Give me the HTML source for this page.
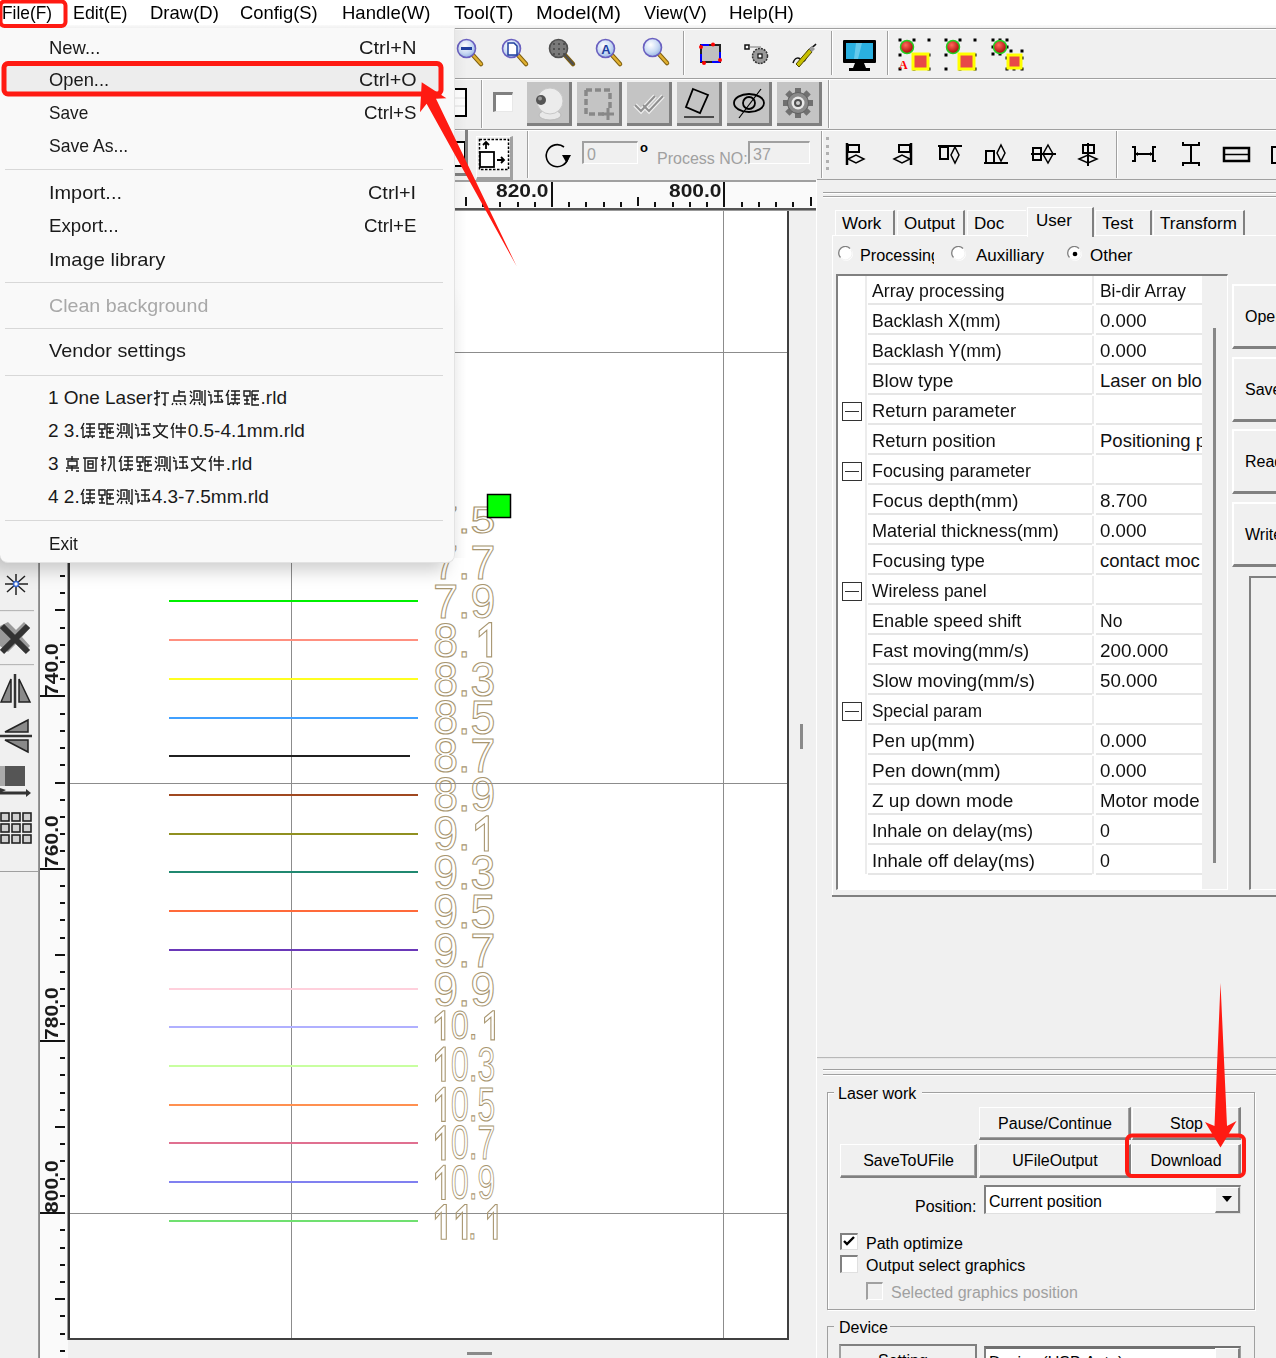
<!DOCTYPE html>
<html><head><meta charset="utf-8"><style>
*{margin:0;padding:0;box-sizing:border-box}
html,body{width:1276px;height:1358px;overflow:hidden;background:#f0f0f0;font-family:"Liberation Sans",sans-serif;color:#000}
.a{position:absolute}
.t{position:absolute;white-space:nowrap;line-height:1}
.hl{position:absolute;height:1px}
.vl{position:absolute;width:1px}
</style></head><body>
<div class="a" style="left:0px;top:0px;width:1276px;height:25px;background:#fff"></div>
<div class="a" style="left:0px;top:25px;width:1276px;height:3px;background:linear-gradient(#fafafa,#f0f0f0)"></div>
<div class="t" style="left:2.0px;top:2.9px;font-size:19px;color:#000;transform-origin:0 0;transform:scaleX(0.9106);">File(F)</div>
<div class="t" style="left:72.5px;top:2.9px;font-size:19px;color:#000;transform-origin:0 0;transform:scaleX(0.9389);">Edit(E)</div>
<div class="t" style="left:149.5px;top:2.9px;font-size:19px;color:#000;transform-origin:0 0;transform:scaleX(0.9734);">Draw(D)</div>
<div class="t" style="left:240.3px;top:2.9px;font-size:19px;color:#000;transform-origin:0 0;transform:scaleX(0.9679);">Config(S)</div>
<div class="t" style="left:341.9px;top:2.9px;font-size:19px;color:#000;transform-origin:0 0;transform:scaleX(0.9745);">Handle(W)</div>
<div class="t" style="left:454.0px;top:2.9px;font-size:19px;color:#000;transform-origin:0 0;transform:scaleX(1.0052);">Tool(T)</div>
<div class="t" style="left:536.0px;top:2.9px;font-size:19px;color:#000;transform-origin:0 0;transform:scaleX(1.0589);">Model(M)</div>
<div class="t" style="left:643.7px;top:2.9px;font-size:19px;color:#000;transform-origin:0 0;transform:scaleX(0.9499);">View(V)</div>
<div class="t" style="left:729.2px;top:2.9px;font-size:19px;color:#000;transform-origin:0 0;transform:scaleX(0.9915);">Help(H)</div>
<div class="a" style="left:0px;top:28px;width:1276px;height:1px;background:#a0a0a0"></div>
<div class="a" style="left:0px;top:29px;width:1276px;height:1px;background:#fff"></div>
<div class="a" style="left:0px;top:78px;width:1276px;height:1px;background:#a0a0a0"></div>
<div class="a" style="left:0px;top:79px;width:1276px;height:1px;background:#fff"></div>
<div class="a" style="left:0px;top:129px;width:1276px;height:1px;background:#a0a0a0"></div>
<div class="a" style="left:0px;top:130px;width:1276px;height:1px;background:#fff"></div>
<div class="a" style="left:817px;top:179px;width:459px;height:1px;background:#a0a0a0"></div>
<svg width="0" height="0" style="position:absolute"><defs><radialGradient id="mg" cx="0.4" cy="0.35" r="0.7"><stop offset="0" stop-color="#ffffff"/><stop offset="0.6" stop-color="#c8daf4"/><stop offset="1" stop-color="#90b0e0"/></radialGradient><radialGradient id="rb" cx="0.4" cy="0.35" r="0.7"><stop offset="0" stop-color="#ff6a5a"/><stop offset="1" stop-color="#a00000"/></radialGradient></defs></svg>
<svg class="a" style="left:454.5px;top:37px" width="31" height="31" viewBox="0 0 31 31"><line x1="17" y1="17" x2="26" y2="27" stroke="#806010" stroke-width="4.5" stroke-linecap="round"/><line x1="17" y1="17" x2="26" y2="27" stroke="#e0b030" stroke-width="2.5" stroke-linecap="round"/><circle cx="11.5" cy="11.5" r="9" fill="url(#mg)" stroke="#6a60c0" stroke-width="1.6"/><rect x="6" y="10" width="11" height="3" fill="#2040a0"/></svg>
<svg class="a" style="left:500px;top:37px" width="31" height="31" viewBox="0 0 31 31"><line x1="17" y1="17" x2="26" y2="27" stroke="#806010" stroke-width="4.5" stroke-linecap="round"/><line x1="17" y1="17" x2="26" y2="27" stroke="#e0b030" stroke-width="2.5" stroke-linecap="round"/><circle cx="11.5" cy="11.5" r="9" fill="url(#mg)" stroke="#6a60c0" stroke-width="1.6"/><path d="M8 6h6l3 3v9H8z" fill="#fff" stroke="#2040a0" stroke-width="1.5"/></svg>
<svg class="a" style="left:547px;top:37px" width="31" height="31" viewBox="0 0 31 31"><line x1="17" y1="17" x2="26" y2="27" stroke="#806010" stroke-width="4.5" stroke-linecap="round"/><line x1="17" y1="17" x2="26" y2="27" stroke="#505050" stroke-width="2.5" stroke-linecap="round"/><circle cx="11.5" cy="11.5" r="9" fill="#7a7a7a" stroke="#505050" stroke-width="1.6"/><g fill="#444"><circle cx="7" cy="7" r="1"/><circle cx="7" cy="12" r="1"/><circle cx="7" cy="17" r="1"/><circle cx="12" cy="7" r="1"/><circle cx="12" cy="12" r="1"/><circle cx="12" cy="17" r="1"/><circle cx="17" cy="7" r="1"/><circle cx="17" cy="12" r="1"/><circle cx="17" cy="17" r="1"/></g></svg>
<svg class="a" style="left:593.5px;top:37px" width="31" height="31" viewBox="0 0 31 31"><line x1="17" y1="17" x2="26" y2="27" stroke="#806010" stroke-width="4.5" stroke-linecap="round"/><line x1="17" y1="17" x2="26" y2="27" stroke="#e0b030" stroke-width="2.5" stroke-linecap="round"/><circle cx="11.5" cy="11.5" r="9" fill="url(#mg)" stroke="#6a60c0" stroke-width="1.6"/><text x="12" y="17" font-size="13" font-weight="bold" text-anchor="middle" fill="#2040a0" font-family="Liberation Sans">A</text></svg>
<svg class="a" style="left:640.5px;top:36px" width="31" height="31" viewBox="0 0 31 31"><line x1="17" y1="17" x2="26" y2="27" stroke="#806010" stroke-width="4.5" stroke-linecap="round"/><line x1="17" y1="17" x2="26" y2="27" stroke="#e0b030" stroke-width="2.5" stroke-linecap="round"/><circle cx="11.5" cy="11.5" r="9" fill="url(#mg)" stroke="#6a60c0" stroke-width="1.6"/></svg>
<div class="a" style="left:683px;top:31px;width:1px;height:44px;background:#a0a0a0"></div>
<div class="a" style="left:684px;top:31px;width:1px;height:44px;background:#fff"></div>
<svg class="a" style="left:698px;top:42px" width="26" height="24" viewBox="0 0 26 24"><rect x="3" y="3" width="19" height="17" fill="#c0c0c0" stroke="#222" stroke-width="2"/><path d="M3 3h8M22 10v10M3 12v8M14 20h8" stroke="#0000ff" stroke-width="2"/><g fill="#f00"><circle cx="3" cy="5" r="2"/><circle cx="15" cy="2.5" r="2"/><circle cx="22" cy="18" r="2"/><circle cx="6" cy="21" r="2"/></g></svg>
<svg class="a" style="left:744px;top:44px" width="28" height="22" viewBox="0 0 28 22"><rect x="1" y="1" width="4" height="4" fill="#fff" stroke="#111" stroke-width="1.5"/><path d="M5 3h12" stroke="#777"/><circle cx="16" cy="12" r="7.5" fill="#9a9a9a" stroke="#333" stroke-width="1.5" stroke-dasharray="2 1"/><rect x="14" y="10" width="4" height="4" fill="#fff" stroke="#111" stroke-width="1.2"/></svg>
<svg class="a" style="left:790px;top:42px" width="28" height="26" viewBox="0 0 28 26"><path d="M3 21c2-6 6-6 8-3s6 0 6-6 6-6 9-10" fill="none" stroke="#111" stroke-width="1.5"/><path d="M6 22l13-15 3 3-13 15z" fill="#c8c000" stroke="#504800" stroke-width="1"/><path d="M19 7l3-3 3 3-3 3z" fill="#999"/></svg>
<div class="a" style="left:831px;top:31px;width:1px;height:44px;background:#a0a0a0"></div>
<div class="a" style="left:832px;top:31px;width:1px;height:44px;background:#fff"></div>
<svg class="a" style="left:842px;top:39px" width="35" height="33" viewBox="0 0 35 33"><rect x="1" y="1" width="33" height="23" rx="1" fill="#000"/><rect x="4" y="4" width="27" height="16" fill="#2ab0e0"/><path d="M14 4l6 0-4 16h-4z" fill="#7fd4f0" opacity="0.7"/><path d="M13 24h9l2 5h4v3H7v-3h4z" fill="#000"/></svg>
<div class="a" style="left:887px;top:31px;width:1px;height:44px;background:#a0a0a0"></div>
<div class="a" style="left:888px;top:31px;width:1px;height:44px;background:#fff"></div>
<svg class="a" style="left:897.5px;top:38px" width="34" height="34" viewBox="0 0 34 34"><rect x="0.5" y="0.5" width="3" height="3" fill="#000"/><rect x="14.5" y="0.5" width="3" height="3" fill="#000"/><rect x="29.5" y="0.5" width="3" height="3" fill="#000"/><rect x="0.5" y="15.5" width="3" height="3" fill="#000"/><rect x="29.5" y="15.5" width="3" height="3" fill="#000"/><rect x="0.5" y="29.5" width="3" height="3" fill="#000"/><rect x="14.5" y="29.5" width="3" height="3" fill="#000"/><rect x="29.5" y="29.5" width="3" height="3" fill="#000"/><circle cx="9" cy="9" r="6.5" fill="url(#rb)" stroke="#20d020" stroke-width="1.5"/><rect x="15" y="16" width="15" height="15" fill="#e84848" stroke="#ffff00" stroke-width="3"/><text x="1" y="31" font-size="12" font-weight="bold" fill="#f00" font-family="Liberation Serif">A</text></svg>
<svg class="a" style="left:943.5px;top:38px" width="34" height="34" viewBox="0 0 34 34"><rect x="0.5" y="0.5" width="3" height="3" fill="#000"/><rect x="14.5" y="0.5" width="3" height="3" fill="#000"/><rect x="29.5" y="0.5" width="3" height="3" fill="#000"/><rect x="0.5" y="15.5" width="3" height="3" fill="#000"/><rect x="29.5" y="15.5" width="3" height="3" fill="#000"/><rect x="0.5" y="29.5" width="3" height="3" fill="#000"/><rect x="14.5" y="29.5" width="3" height="3" fill="#000"/><rect x="29.5" y="29.5" width="3" height="3" fill="#000"/><circle cx="9" cy="9" r="6.5" fill="url(#rb)" stroke="#20d020" stroke-width="1.5"/><rect x="15" y="16" width="15" height="15" fill="#e84848" stroke="#ffff00" stroke-width="3"/></svg>
<svg class="a" style="left:990.5px;top:38px" width="34" height="34" viewBox="0 0 34 34"><rect x="0.5" y="0.5" width="3" height="3" fill="#000"/><rect x="7.5" y="0.5" width="3" height="3" fill="#000"/><rect x="14.5" y="0.5" width="3" height="3" fill="#000"/><rect x="0.5" y="7.5" width="3" height="3" fill="#000"/><rect x="14.5" y="7.5" width="3" height="3" fill="#000"/><rect x="0.5" y="14.5" width="3" height="3" fill="#000"/><rect x="7.5" y="14.5" width="3" height="3" fill="#000"/><rect x="18.5" y="11.5" width="3" height="3" fill="#000"/><rect x="29.5" y="11.5" width="3" height="3" fill="#000"/><rect x="14.5" y="18.5" width="3" height="3" fill="#000"/><rect x="29.5" y="18.5" width="3" height="3" fill="#000"/><rect x="14.5" y="29.5" width="3" height="3" fill="#000"/><rect x="21.5" y="29.5" width="3" height="3" fill="#000"/><rect x="29.5" y="29.5" width="3" height="3" fill="#000"/><circle cx="9" cy="9" r="6.5" fill="url(#rb)" stroke="#20d020" stroke-width="1.5"/><rect x="17" y="17" width="13" height="13" fill="#e84848" stroke="#ffff00" stroke-width="3"/></svg>
<svg class="a" style="left:451px;top:86px" width="18" height="34" viewBox="0 0 18 34"><rect x="1" y="3" width="14" height="27" fill="#fff" stroke="#000" stroke-width="2"/><path d="M2 12h12M2 20h12" stroke="#e0e0e0"/></svg>
<div class="a" style="left:481px;top:80px;width:1px;height:48px;background:#a0a0a0"></div>
<div class="a" style="left:482px;top:80px;width:1px;height:48px;background:#fff"></div>
<div class="a" style="left:493px;top:92px;width:20px;height:20px;background:#fff;border-top:3px solid #808080;border-left:3px solid #808080;border-right:1px solid #e8e8e8;border-bottom:1px solid #e8e8e8"></div>
<div class="a" style="left:527px;top:82px;width:45px;height:44px;background:#c4c4c4;border-right:3px solid #808080;border-bottom:3px solid #808080;"></div>
<div class="a" style="left:577px;top:82px;width:45px;height:44px;background:#c4c4c4;border-right:3px solid #808080;border-bottom:3px solid #808080;"></div>
<div class="a" style="left:627px;top:82px;width:45px;height:44px;background:#c4c4c4;border-right:3px solid #808080;border-bottom:3px solid #808080;"></div>
<div class="a" style="left:677px;top:82px;width:45px;height:44px;background:#c4c4c4;border-right:3px solid #808080;border-bottom:3px solid #808080;"></div>
<div class="a" style="left:727px;top:82px;width:45px;height:44px;background:#c4c4c4;border-right:3px solid #808080;border-bottom:3px solid #808080;"></div>
<div class="a" style="left:777px;top:82px;width:45px;height:44px;background:#c4c4c4;border-right:3px solid #808080;border-bottom:3px solid #808080;"></div>
<svg class="a" style="left:532px;top:86px" width="36" height="36" viewBox="0 0 36 36"><ellipse cx="18" cy="29" rx="11" ry="5" fill="#e8e8e8" stroke="#bbb"/><circle cx="18" cy="15" r="13" fill="#ececec" stroke="#c8c8c8"/><circle cx="9" cy="14" r="5" fill="#555"/><circle cx="8" cy="12.5" r="2" fill="#999"/></svg>
<svg class="a" style="left:582px;top:86px" width="36" height="36" viewBox="0 0 36 36"><path d="M4 4h24v20M4 4v24h20" fill="none" stroke="#888" stroke-width="3.5" stroke-dasharray="6 3"/><path d="M26 22v12M20 28h12" stroke="#888" stroke-width="3"/></svg>
<svg class="a" style="left:632px;top:86px" width="36" height="36" viewBox="0 0 36 36"><path d="M3 19l6 6 14-15M11 19l6 6 14-15" fill="none" stroke="#f0f0f0" stroke-width="4.5"/><path d="M3 19l6 6 14-15M11 19l6 6 14-15" fill="none" stroke="#909090" stroke-width="2"/></svg>
<svg class="a" style="left:682px;top:86px" width="36" height="36" viewBox="0 0 36 36"><path d="M11 3l15 6-8 18-14-6z" fill="none" stroke="#000" stroke-width="1.8"/><path d="M2 31h30" stroke="#222" stroke-width="1.5"/></svg>
<svg class="a" style="left:730px;top:86px" width="40" height="36" viewBox="0 0 40 36"><ellipse cx="19" cy="17" rx="15" ry="9" fill="none" stroke="#000" stroke-width="1.8"/><circle cx="19" cy="17" r="6" fill="none" stroke="#000" stroke-width="1.8"/><path d="M31 3L9 32" stroke="#000" stroke-width="1.2"/></svg>
<svg class="a" style="left:780px;top:86px" width="36" height="36" viewBox="0 0 36 36"><g transform="translate(18,17)"><rect x="-3" y="-15" width="6" height="7" fill="#707070" transform="rotate(0)"/><rect x="-3" y="-15" width="6" height="7" fill="#707070" transform="rotate(45)"/><rect x="-3" y="-15" width="6" height="7" fill="#707070" transform="rotate(90)"/><rect x="-3" y="-15" width="6" height="7" fill="#707070" transform="rotate(135)"/><rect x="-3" y="-15" width="6" height="7" fill="#707070" transform="rotate(180)"/><rect x="-3" y="-15" width="6" height="7" fill="#707070" transform="rotate(225)"/><rect x="-3" y="-15" width="6" height="7" fill="#707070" transform="rotate(270)"/><rect x="-3" y="-15" width="6" height="7" fill="#707070" transform="rotate(315)"/><circle r="10.5" fill="#8a8a8a" stroke="#606060" stroke-width="1"/><circle r="6.5" fill="#e8e8e8"/><circle r="4" fill="#505050"/><circle r="2" fill="#d0d0d0"/></g></svg>
<div class="a" style="left:828px;top:80px;width:1px;height:48px;background:#a0a0a0"></div>
<div class="a" style="left:829px;top:80px;width:1px;height:48px;background:#fff"></div>
<svg class="a" style="left:451px;top:136px" width="18" height="38" viewBox="0 0 18 38"><rect x="2" y="6" width="12" height="24" fill="#fff" stroke="#000" stroke-width="2"/></svg>
<div class="a" style="left:454px;top:130px;width:14px;height:46px;border-right:3px solid #808080;border-bottom:3px solid #808080"></div>
<div class="a" style="left:476px;top:136px;width:37px;height:44px;background:#f0f0f0;border-right:3px solid #a0a0a0;border-bottom:3px solid #a0a0a0;border-top:1px solid #fff;border-left:1px solid #fff"></div>
<svg class="a" style="left:478px;top:138px" width="32" height="36" viewBox="0 0 32 36"><rect x="1.5" y="1.5" width="29" height="30" fill="#fff" stroke="#000" stroke-width="1.5" stroke-dasharray="2.5 1.5"/><rect x="2" y="14" width="14" height="15" fill="#fff" stroke="#000" stroke-width="1.8"/><path d="M8 11V4M5 7l3-3 3 3" fill="none" stroke="#000" stroke-width="1.8"/><path d="M19 22h7M23 19l3 3-3 3" fill="none" stroke="#000" stroke-width="1.8"/></svg>
<div class="a" style="left:527px;top:131px;width:1px;height:47px;background:#a0a0a0"></div>
<div class="a" style="left:528px;top:131px;width:1px;height:47px;background:#fff"></div>
<svg class="a" style="left:542px;top:141px" width="32" height="30" viewBox="0 0 32 30"><path d="M22 6A11 11 0 1 0 26 17" fill="none" stroke="#000" stroke-width="1.6"/><path d="M20 14h9l-4.5 8z" fill="#000"/></svg>
<div class="a" style="left:582px;top:141px;width:56px;height:23px;background:#f0f0f0;border-top:2px solid #a0a0a0;border-left:2px solid #a0a0a0;border-right:1px solid #fff;border-bottom:1px solid #fff"></div>
<div class="t" style="left:587px;top:146.5px;font-size:16px;color:#a0a0a0;">0</div>
<div class="t" style="left:640px;top:141.0px;font-size:13px;color:#000;font-weight:bold">o</div>
<div class="t" style="left:657px;top:150.5px;font-size:16px;color:#a0a0a0;">Process NO:</div>
<div class="a" style="left:748px;top:141px;width:62px;height:23px;background:#f0f0f0;border-top:2px solid #a0a0a0;border-left:2px solid #a0a0a0;border-right:1px solid #fff;border-bottom:1px solid #fff"></div>
<div class="t" style="left:753px;top:146.5px;font-size:16px;color:#a0a0a0;">37</div>
<div class="a" style="left:821px;top:131px;width:1px;height:47px;background:#a0a0a0"></div>
<div class="a" style="left:822px;top:131px;width:1px;height:47px;background:#fff"></div>
<div class="a" style="left:826px;top:137.0px;width:3px;height:3px;background:#b0b0b0"></div>
<div class="a" style="left:826px;top:144.5px;width:3px;height:3px;background:#b0b0b0"></div>
<div class="a" style="left:826px;top:152.0px;width:3px;height:3px;background:#b0b0b0"></div>
<div class="a" style="left:826px;top:159.5px;width:3px;height:3px;background:#b0b0b0"></div>
<div class="a" style="left:826px;top:167.0px;width:3px;height:3px;background:#b0b0b0"></div>
<svg class="a" style="left:845px;top:142px" width="27" height="26" viewBox="0 0 27 26"><path d="M2 1v22" stroke="#000" stroke-width="2.5"/><rect x="3" y="3" width="11" height="7" fill="none" stroke="#000" stroke-width="2"/><path d="M3 17l8-4 8 4-8 4z" fill="none" stroke="#000" stroke-width="1.5"/></svg>
<svg class="a" style="left:892px;top:142px" width="27" height="26" viewBox="0 0 27 26"><path d="M19 1v22" stroke="#000" stroke-width="2.5"/><rect x="7" y="3" width="11" height="7" fill="none" stroke="#000" stroke-width="2"/><path d="M2 17l8-4 8 4-8 4z" fill="none" stroke="#000" stroke-width="1.5"/></svg>
<svg class="a" style="left:937px;top:142px" width="27" height="26" viewBox="0 0 27 26"><path d="M1 4h24" stroke="#000" stroke-width="2"/><rect x="3" y="5" width="8" height="12" fill="none" stroke="#000" stroke-width="2"/><path d="M18 5l4 8-4 8-4-8z" fill="none" stroke="#000" stroke-width="1.5"/></svg>
<svg class="a" style="left:983px;top:142px" width="27" height="26" viewBox="0 0 27 26"><path d="M1 21h24" stroke="#000" stroke-width="2"/><rect x="3" y="9" width="8" height="12" fill="none" stroke="#000" stroke-width="2"/><path d="M18 3l4 8-4 8-4-8z" fill="none" stroke="#000" stroke-width="1.5"/></svg>
<svg class="a" style="left:1030px;top:142px" width="27" height="26" viewBox="0 0 27 26"><path d="M1 12h25" stroke="#000" stroke-width="2"/><rect x="3" y="6" width="8" height="12" fill="none" stroke="#000" stroke-width="2"/><path d="M18 3l5 9-5 9-5-9z" fill="none" stroke="#000" stroke-width="1.5"/></svg>
<svg class="a" style="left:1076px;top:142px" width="27" height="26" viewBox="0 0 27 26"><path d="M12 1v23" stroke="#000" stroke-width="2"/><rect x="7" y="3" width="11" height="8" fill="none" stroke="#000" stroke-width="2"/><path d="M3 17l9-4 9 4-9 4z" fill="none" stroke="#000" stroke-width="1.5"/></svg>
<div class="a" style="left:1116px;top:131px;width:1px;height:47px;background:#a0a0a0"></div>
<div class="a" style="left:1117px;top:131px;width:1px;height:47px;background:#fff"></div>
<svg class="a" style="left:1130px;top:144px" width="28" height="20" viewBox="0 0 28 20"><path d="M2 3h3v14H2M26 3h-3v14h3M5 10h18" fill="none" stroke="#000" stroke-width="2"/><path d="M5 10l3-2v4zM23 10l-3-2v4z" fill="#000"/></svg>
<svg class="a" style="left:1180px;top:140px" width="22" height="28" viewBox="0 0 22 28"><path d="M3 2v3h16V2M3 26v-3h16v3M11 5v18" fill="none" stroke="#000" stroke-width="2"/></svg>
<svg class="a" style="left:1222px;top:146px" width="30" height="18" viewBox="0 0 30 18"><rect x="2" y="2" width="25" height="13" fill="none" stroke="#000" stroke-width="2.5"/><path d="M3 8.5h23" stroke="#000" stroke-width="1.5"/></svg>
<div class="a" style="left:1271px;top:146px;width:5px;height:18px;border-left:2px solid #000;border-top:2px solid #000;border-bottom:2px solid #000"></div>
<div class="a" style="left:0px;top:211px;width:38px;height:661px;background:#f0f0f0"></div>
<div class="a" style="left:38px;top:211px;width:2px;height:1147px;background:linear-gradient(90deg,#a0a0a0,#808080)"></div>
<div class="a" style="left:40px;top:211px;width:28px;height:1147px;background:#fafafa"></div>
<div class="a" style="left:70px;top:211px;width:718px;height:1127px;background:#fff"></div>
<div class="a" style="left:67px;top:211px;width:1px;height:1129px;background:#999"></div>
<div class="a" style="left:68px;top:211px;width:2px;height:1129px;background:#333"></div>
<div class="a" style="left:68px;top:1338px;width:721px;height:2px;background:#404040"></div>
<div class="a" style="left:787px;top:211px;width:2px;height:1129px;background:#404040"></div>
<div class="a" style="left:40px;top:180px;width:776px;height:2px;background:#a0a0a0"></div>
<div class="a" style="left:40px;top:182px;width:776px;height:26px;background:#fafafa"></div>
<div class="a" style="left:40px;top:208px;width:776px;height:2px;background:#555"></div>
<div class="a" style="left:40px;top:210px;width:776px;height:1px;background:#999"></div>
<div class="a" style="left:789px;top:211px;width:27px;height:1147px;background:#f0f0f0"></div>
<div class="a" style="left:800px;top:724px;width:3px;height:25px;background:#8a8a8a"></div>
<div class="a" style="left:467px;top:1352px;width:25px;height:3px;background:#8a8a8a"></div>
<div class="a" style="left:379px;top:182px;width:2px;height:25px;background:#111"></div>
<div class="a" style="left:396px;top:202px;width:2px;height:5px;background:#111"></div>
<div class="a" style="left:413px;top:202px;width:2px;height:5px;background:#111"></div>
<div class="a" style="left:430px;top:202px;width:2px;height:5px;background:#111"></div>
<div class="a" style="left:448px;top:202px;width:2px;height:5px;background:#111"></div>
<div class="a" style="left:465px;top:197px;width:2px;height:9px;background:#111"></div>
<div class="a" style="left:482px;top:202px;width:2px;height:5px;background:#111"></div>
<div class="a" style="left:499px;top:202px;width:2px;height:5px;background:#111"></div>
<div class="a" style="left:517px;top:202px;width:2px;height:5px;background:#111"></div>
<div class="a" style="left:534px;top:202px;width:2px;height:5px;background:#111"></div>
<div class="a" style="left:551px;top:182px;width:2px;height:25px;background:#111"></div>
<div class="a" style="left:568px;top:202px;width:2px;height:5px;background:#111"></div>
<div class="a" style="left:585px;top:202px;width:2px;height:5px;background:#111"></div>
<div class="a" style="left:603px;top:202px;width:2px;height:5px;background:#111"></div>
<div class="a" style="left:620px;top:202px;width:2px;height:5px;background:#111"></div>
<div class="a" style="left:637px;top:197px;width:2px;height:9px;background:#111"></div>
<div class="a" style="left:654px;top:202px;width:2px;height:5px;background:#111"></div>
<div class="a" style="left:672px;top:202px;width:2px;height:5px;background:#111"></div>
<div class="a" style="left:689px;top:202px;width:2px;height:5px;background:#111"></div>
<div class="a" style="left:706px;top:202px;width:2px;height:5px;background:#111"></div>
<div class="a" style="left:723px;top:182px;width:2px;height:25px;background:#111"></div>
<div class="a" style="left:741px;top:202px;width:2px;height:5px;background:#111"></div>
<div class="a" style="left:758px;top:202px;width:2px;height:5px;background:#111"></div>
<div class="a" style="left:775px;top:202px;width:2px;height:5px;background:#111"></div>
<div class="a" style="left:792px;top:202px;width:2px;height:5px;background:#111"></div>
<div class="a" style="left:810px;top:197px;width:2px;height:9px;background:#111"></div>
<div class="t" style="left:496.4px;top:183.4px;font-size:17.7px;color:#1a1a1a;transform-origin:0 0;transform:scaleX(1.1841);font-weight:bold;">820.0</div>
<div class="t" style="left:668.9px;top:183.4px;font-size:17.7px;color:#1a1a1a;transform-origin:0 0;transform:scaleX(1.1841);font-weight:bold;">800.0</div>
<div class="t" style="left:324.0px;top:183.4px;font-size:17.7px;color:#1a1a1a;transform-origin:0 0;transform:scaleX(1.1841);font-weight:bold;">840.0</div>
<div class="t" style="left:151.7px;top:183.4px;font-size:17.7px;color:#1a1a1a;transform-origin:0 0;transform:scaleX(1.1841);font-weight:bold;">860.0</div>
<div class="a" style="left:40px;top:351px;width:25px;height:2px;background:#111"></div>
<div class="a" style="left:60px;top:368px;width:5px;height:2px;background:#111"></div>
<div class="a" style="left:60px;top:386px;width:5px;height:2px;background:#111"></div>
<div class="a" style="left:60px;top:403px;width:5px;height:2px;background:#111"></div>
<div class="a" style="left:60px;top:420px;width:5px;height:2px;background:#111"></div>
<div class="a" style="left:55px;top:437px;width:10px;height:2px;background:#111"></div>
<div class="a" style="left:60px;top:454px;width:5px;height:2px;background:#111"></div>
<div class="a" style="left:60px;top:472px;width:5px;height:2px;background:#111"></div>
<div class="a" style="left:60px;top:489px;width:5px;height:2px;background:#111"></div>
<div class="a" style="left:60px;top:506px;width:5px;height:2px;background:#111"></div>
<div class="a" style="left:40px;top:523px;width:25px;height:2px;background:#111"></div>
<div class="a" style="left:60px;top:541px;width:5px;height:2px;background:#111"></div>
<div class="a" style="left:60px;top:558px;width:5px;height:2px;background:#111"></div>
<div class="a" style="left:60px;top:575px;width:5px;height:2px;background:#111"></div>
<div class="a" style="left:60px;top:592px;width:5px;height:2px;background:#111"></div>
<div class="a" style="left:55px;top:609px;width:10px;height:2px;background:#111"></div>
<div class="a" style="left:60px;top:627px;width:5px;height:2px;background:#111"></div>
<div class="a" style="left:60px;top:644px;width:5px;height:2px;background:#111"></div>
<div class="a" style="left:60px;top:661px;width:5px;height:2px;background:#111"></div>
<div class="a" style="left:60px;top:678px;width:5px;height:2px;background:#111"></div>
<div class="a" style="left:40px;top:695px;width:25px;height:2px;background:#111"></div>
<div class="a" style="left:60px;top:713px;width:5px;height:2px;background:#111"></div>
<div class="a" style="left:60px;top:730px;width:5px;height:2px;background:#111"></div>
<div class="a" style="left:60px;top:747px;width:5px;height:2px;background:#111"></div>
<div class="a" style="left:60px;top:764px;width:5px;height:2px;background:#111"></div>
<div class="a" style="left:55px;top:782px;width:10px;height:2px;background:#111"></div>
<div class="a" style="left:60px;top:799px;width:5px;height:2px;background:#111"></div>
<div class="a" style="left:60px;top:816px;width:5px;height:2px;background:#111"></div>
<div class="a" style="left:60px;top:833px;width:5px;height:2px;background:#111"></div>
<div class="a" style="left:60px;top:850px;width:5px;height:2px;background:#111"></div>
<div class="a" style="left:40px;top:868px;width:25px;height:2px;background:#111"></div>
<div class="a" style="left:60px;top:885px;width:5px;height:2px;background:#111"></div>
<div class="a" style="left:60px;top:902px;width:5px;height:2px;background:#111"></div>
<div class="a" style="left:60px;top:919px;width:5px;height:2px;background:#111"></div>
<div class="a" style="left:60px;top:937px;width:5px;height:2px;background:#111"></div>
<div class="a" style="left:55px;top:954px;width:10px;height:2px;background:#111"></div>
<div class="a" style="left:60px;top:971px;width:5px;height:2px;background:#111"></div>
<div class="a" style="left:60px;top:988px;width:5px;height:2px;background:#111"></div>
<div class="a" style="left:60px;top:1005px;width:5px;height:2px;background:#111"></div>
<div class="a" style="left:60px;top:1023px;width:5px;height:2px;background:#111"></div>
<div class="a" style="left:40px;top:1040px;width:25px;height:2px;background:#111"></div>
<div class="a" style="left:60px;top:1057px;width:5px;height:2px;background:#111"></div>
<div class="a" style="left:60px;top:1074px;width:5px;height:2px;background:#111"></div>
<div class="a" style="left:60px;top:1092px;width:5px;height:2px;background:#111"></div>
<div class="a" style="left:60px;top:1109px;width:5px;height:2px;background:#111"></div>
<div class="a" style="left:55px;top:1126px;width:10px;height:2px;background:#111"></div>
<div class="a" style="left:60px;top:1143px;width:5px;height:2px;background:#111"></div>
<div class="a" style="left:60px;top:1160px;width:5px;height:2px;background:#111"></div>
<div class="a" style="left:60px;top:1178px;width:5px;height:2px;background:#111"></div>
<div class="a" style="left:60px;top:1195px;width:5px;height:2px;background:#111"></div>
<div class="a" style="left:40px;top:1212px;width:25px;height:2px;background:#111"></div>
<div class="a" style="left:60px;top:1229px;width:5px;height:2px;background:#111"></div>
<div class="a" style="left:60px;top:1247px;width:5px;height:2px;background:#111"></div>
<div class="a" style="left:60px;top:1264px;width:5px;height:2px;background:#111"></div>
<div class="a" style="left:60px;top:1281px;width:5px;height:2px;background:#111"></div>
<div class="a" style="left:55px;top:1298px;width:10px;height:2px;background:#111"></div>
<div class="a" style="left:60px;top:1315px;width:5px;height:2px;background:#111"></div>
<div class="a" style="left:60px;top:1333px;width:5px;height:2px;background:#111"></div>
<div class="a" style="left:60px;top:1350px;width:5px;height:2px;background:#111"></div>
<div class="a" style="left:43.7px;top:695.5px;width:0;height:0;transform-origin:0 0;transform:rotate(-90deg)"><div class="t" style="left:-0.00px;top:-0.66px;font-size:18.5px;font-weight:bold;color:#1a1a1a;transform-origin:0 0;transform:scaleX(1.1393)">740.0</div></div>
<div class="a" style="left:43.7px;top:867.7px;width:0;height:0;transform-origin:0 0;transform:rotate(-90deg)"><div class="t" style="left:-0.00px;top:-0.66px;font-size:18.5px;font-weight:bold;color:#1a1a1a;transform-origin:0 0;transform:scaleX(1.1393)">760.0</div></div>
<div class="a" style="left:43.7px;top:1040.0px;width:0;height:0;transform-origin:0 0;transform:rotate(-90deg)"><div class="t" style="left:-0.00px;top:-0.66px;font-size:18.5px;font-weight:bold;color:#1a1a1a;transform-origin:0 0;transform:scaleX(1.1393)">780.0</div></div>
<div class="a" style="left:43.7px;top:1212.7px;width:0;height:0;transform-origin:0 0;transform:rotate(-90deg)"><div class="t" style="left:-0.00px;top:-0.66px;font-size:18.5px;font-weight:bold;color:#1a1a1a;transform-origin:0 0;transform:scaleX(1.1393)">800.0</div></div>
<div class="a" style="left:43.7px;top:523.2px;width:0;height:0;transform-origin:0 0;transform:rotate(-90deg)"><div class="t" style="left:-0.00px;top:-0.66px;font-size:18.5px;font-weight:bold;color:#1a1a1a;transform-origin:0 0;transform:scaleX(1.1393)">720.0</div></div>
<div class="a" style="left:43.7px;top:351.2px;width:0;height:0;transform-origin:0 0;transform:rotate(-90deg)"><div class="t" style="left:-0.00px;top:-0.66px;font-size:18.5px;font-weight:bold;color:#1a1a1a;transform-origin:0 0;transform:scaleX(1.1393)">700.0</div></div>
<div class="a" style="left:291px;top:211px;width:1px;height:1127px;background:#8c8c8c"></div>
<div class="a" style="left:723px;top:211px;width:1px;height:1127px;background:#8c8c8c"></div>
<div class="a" style="left:70px;top:352px;width:717px;height:1px;background:#8c8c8c"></div>
<div class="a" style="left:70px;top:783px;width:717px;height:1px;background:#8c8c8c"></div>
<div class="a" style="left:70px;top:1213px;width:717px;height:1px;background:#8c8c8c"></div>
<div class="a" style="left:169px;top:600px;width:249px;height:2px;background:#00f000"></div>
<div class="a" style="left:169px;top:639px;width:249px;height:2px;background:#ff9080"></div>
<div class="a" style="left:169px;top:678px;width:249px;height:2px;background:#ffff20"></div>
<div class="a" style="left:169px;top:717px;width:249px;height:2px;background:#40a0ff"></div>
<div class="a" style="left:169px;top:755px;width:241px;height:2px;background:#202020"></div>
<div class="a" style="left:169px;top:794px;width:249px;height:2px;background:#a04820"></div>
<div class="a" style="left:169px;top:833px;width:249px;height:2px;background:#909020"></div>
<div class="a" style="left:169px;top:871px;width:249px;height:2px;background:#208870"></div>
<div class="a" style="left:169px;top:910px;width:249px;height:2px;background:#ff6a3a"></div>
<div class="a" style="left:169px;top:949px;width:249px;height:2px;background:#6a38b8"></div>
<div class="a" style="left:169px;top:988px;width:249px;height:2px;background:#ffd0dc"></div>
<div class="a" style="left:169px;top:1026px;width:249px;height:2px;background:#b0b0ff"></div>
<div class="a" style="left:169px;top:1065px;width:249px;height:2px;background:#c8ffa0"></div>
<div class="a" style="left:169px;top:1104px;width:249px;height:2px;background:#ff9050"></div>
<div class="a" style="left:169px;top:1142px;width:249px;height:2px;background:#e07090"></div>
<div class="a" style="left:169px;top:1181px;width:249px;height:2px;background:#8080f0"></div>
<div class="a" style="left:169px;top:1220px;width:249px;height:2px;background:#70e070"></div>
<svg class="a" style="left:0;top:0" width="1276" height="1358"><text x="433.3" y="533.40" font-family="Liberation Sans" font-size="37.26" textLength="62.0" lengthAdjust="spacingAndGlyphs" fill="none" stroke="#a89670" stroke-width="1.1">7.5</text><text x="433.3" y="578.80" font-family="Liberation Sans" font-size="48.59" textLength="62.0" lengthAdjust="spacingAndGlyphs" fill="none" stroke="#a89670" stroke-width="1.1">7.7</text><text x="433.3" y="617.60" font-family="Liberation Sans" font-size="48.59" textLength="62.0" lengthAdjust="spacingAndGlyphs" fill="none" stroke="#a89670" stroke-width="1.1">7.9</text><text x="433.3" y="656.60" font-family="Liberation Sans" font-size="48.59" textLength="62.0" lengthAdjust="spacingAndGlyphs" fill="none" stroke="#a89670" stroke-width="1.1">8.<tspan stroke="none">1</tspan></text><text x="433.3" y="695.60" font-family="Liberation Sans" font-size="48.59" textLength="62.0" lengthAdjust="spacingAndGlyphs" fill="none" stroke="#a89670" stroke-width="1.1">8.3</text><text x="433.3" y="734.00" font-family="Liberation Sans" font-size="48.59" textLength="62.0" lengthAdjust="spacingAndGlyphs" fill="none" stroke="#a89670" stroke-width="1.1">8.5</text><text x="433.3" y="772.40" font-family="Liberation Sans" font-size="48.59" textLength="62.0" lengthAdjust="spacingAndGlyphs" fill="none" stroke="#a89670" stroke-width="1.1">8.7</text><text x="433.3" y="811.20" font-family="Liberation Sans" font-size="48.59" textLength="62.0" lengthAdjust="spacingAndGlyphs" fill="none" stroke="#a89670" stroke-width="1.1">8.9</text><text x="433.3" y="849.60" font-family="Liberation Sans" font-size="48.59" textLength="62.0" lengthAdjust="spacingAndGlyphs" fill="none" stroke="#a89670" stroke-width="1.1">9.<tspan stroke="none">1</tspan></text><text x="433.3" y="888.80" font-family="Liberation Sans" font-size="48.59" textLength="62.0" lengthAdjust="spacingAndGlyphs" fill="none" stroke="#a89670" stroke-width="1.1">9.3</text><text x="433.3" y="928.40" font-family="Liberation Sans" font-size="48.59" textLength="62.0" lengthAdjust="spacingAndGlyphs" fill="none" stroke="#a89670" stroke-width="1.1">9.5</text><text x="433.3" y="966.80" font-family="Liberation Sans" font-size="48.59" textLength="62.0" lengthAdjust="spacingAndGlyphs" fill="none" stroke="#a89670" stroke-width="1.1">9.7</text><text x="433.3" y="1005.60" font-family="Liberation Sans" font-size="48.59" textLength="62.0" lengthAdjust="spacingAndGlyphs" fill="none" stroke="#a89670" stroke-width="1.1">9.9</text><text x="433.3" y="1039.40" font-family="Liberation Sans" font-size="40.39" textLength="62.0" lengthAdjust="spacingAndGlyphs" fill="none" stroke="#a89670" stroke-width="1.1"><tspan stroke="none">1</tspan>0.<tspan stroke="none">1</tspan></text><text x="433.3" y="1080.80" font-family="Liberation Sans" font-size="48.34" textLength="62.0" lengthAdjust="spacingAndGlyphs" fill="none" stroke="#a89670" stroke-width="1.1"><tspan stroke="none">1</tspan>0.3</text><text x="433.3" y="1120.60" font-family="Liberation Sans" font-size="48.34" textLength="62.0" lengthAdjust="spacingAndGlyphs" fill="none" stroke="#a89670" stroke-width="1.1"><tspan stroke="none">1</tspan>0.5</text><text x="433.3" y="1159.40" font-family="Liberation Sans" font-size="48.34" textLength="62.0" lengthAdjust="spacingAndGlyphs" fill="none" stroke="#a89670" stroke-width="1.1"><tspan stroke="none">1</tspan>0.7</text><text x="433.3" y="1199.00" font-family="Liberation Sans" font-size="48.34" textLength="62.0" lengthAdjust="spacingAndGlyphs" fill="none" stroke="#a89670" stroke-width="1.1"><tspan stroke="none">1</tspan>0.9</text><text x="433.3" y="1238.60" font-family="Liberation Sans" font-size="48.34" textLength="62.0" lengthAdjust="spacingAndGlyphs" fill="none" stroke="#a89670" stroke-width="1.1"><tspan stroke="none">1</tspan><tspan stroke="none">1</tspan>.<tspan stroke="none">1</tspan></text><path d="M491.6 622.6L491.6 656.9L486.8 656.9L486.8 630.3L479.2 636.8L479.2 630.7L489.1 622.6Z" fill="none" stroke="#a89670" stroke-width="1.1"/><path d="M488.3 815.9L488.3 851.0L484.4 851.0L484.4 823.8L475.7 830.5L475.7 824.2L486.4 815.9Z" fill="none" stroke="#a89670" stroke-width="1.1"/><path d="M444.8 1010.8L444.8 1039.9L441.4 1039.9L441.4 1017.3L435.2 1022.8L435.2 1017.6L443.1 1010.8Z" fill="none" stroke="#a89670" stroke-width="1.1"/><path d="M494.4 1010.8L494.4 1039.9L490.9 1039.9L490.9 1017.3L484.6 1022.8L484.6 1017.6L492.7 1010.8Z" fill="none" stroke="#a89670" stroke-width="1.1"/><path d="M445.2 1047.0L445.2 1081.2L441.7 1081.2L441.7 1054.6L435.6 1061.1L435.6 1055.0L443.5 1047.0Z" fill="none" stroke="#a89670" stroke-width="1.1"/><path d="M445.2 1087.2L445.2 1121.4L441.7 1121.4L441.7 1094.8L435.6 1101.3L435.6 1095.2L443.5 1087.2Z" fill="none" stroke="#a89670" stroke-width="1.1"/><path d="M445.2 1125.8L445.2 1160.0L441.7 1160.0L441.7 1133.5L435.6 1140.0L435.6 1133.9L443.5 1125.8Z" fill="none" stroke="#a89670" stroke-width="1.1"/><path d="M445.2 1165.2L445.2 1199.5L441.7 1199.5L441.7 1172.9L435.6 1179.4L435.6 1173.3L443.5 1165.2Z" fill="none" stroke="#a89670" stroke-width="1.1"/><path d="M446.3 1204.5L446.3 1239.2L441.2 1239.2L441.2 1212.4L435.4 1219.0L435.4 1212.7L443.8 1204.5Z" fill="none" stroke="#a89670" stroke-width="1.1"/><path d="M466.9 1204.5L466.9 1239.2L462.4 1239.2L462.4 1212.4L456.2 1219.0L456.2 1212.7L464.7 1204.5Z" fill="none" stroke="#a89670" stroke-width="1.1"/><path d="M497.1 1204.5L497.1 1239.2L493.4 1239.2L493.4 1212.4L487.6 1219.0L487.6 1212.7L495.3 1204.5Z" fill="none" stroke="#a89670" stroke-width="1.1"/><rect x="487.5" y="494.5" width="23" height="23" fill="#00ff00" stroke="#000" stroke-width="1.5"/></svg>
<div class="a" style="left:0px;top:610px;width:34px;height:2px;background:linear-gradient(#a0a0a0,#fff)"></div>
<div class="a" style="left:0px;top:664px;width:34px;height:2px;background:linear-gradient(#a0a0a0,#fff)"></div>
<div class="a" style="left:0px;top:871px;width:38px;height:1px;background:#a0a0a0"></div>
<svg class="a" style="left:2px;top:572px" width="28" height="26" viewBox="0 0 28 26"><path d="M14 2v21M3 12h23M5 4l18 16M23 4L5 20" stroke="#222" stroke-width="1.5"/><circle cx="14" cy="12" r="2.5" fill="#fff" stroke="#3a6ad0" stroke-width="1.6"/></svg>
<svg class="a" style="left:0px;top:620px" width="32" height="38" viewBox="0 0 32 38"><path d="M0 6l8-4 8 8 8-8 6 6-8 9 8 9-6 6-8-8-8 8-8-6z" fill="#9a9a9a"/><path d="M0 10l4-4 10 10 10-10 4 4-10 10 10 10-4 4-10-10-10 10-4-4z" fill="none" stroke="#333" stroke-width="0"/><path d="M2 6l26 26M28 6L2 32" stroke="#333" stroke-width="6"/></svg>
<svg class="a" style="left:0px;top:672px" width="34" height="40" viewBox="0 0 34 40"><path d="M15 2v34" stroke="#333" stroke-width="2.5"/><path d="M11 7L1 30h10z" fill="#8a8a8a" stroke="#222" stroke-width="1.5"/><path d="M19 7l11 23H19z" fill="#8a8a8a" stroke="#222" stroke-width="1.5"/></svg>
<svg class="a" style="left:0px;top:718px" width="34" height="38" viewBox="0 0 34 38"><path d="M0 18h32" stroke="#333" stroke-width="2.5"/><path d="M28 2L5 14h23z" fill="#8a8a8a" stroke="#222" stroke-width="1.5"/><path d="M28 34L5 22h23z" fill="#8a8a8a" stroke="#222" stroke-width="1.5"/></svg>
<svg class="a" style="left:0px;top:764px" width="34" height="40" viewBox="0 0 34 40"><rect x="5" y="2" width="20" height="20" fill="#555"/><rect x="0" y="2" width="5" height="20" fill="#aaa"/><path d="M0 29h28" stroke="#333" stroke-width="3"/><path d="M26 25l5 4-5 4z" fill="#333"/><path d="M0 24l6 2-6 3z" fill="#333"/></svg>
<svg class="a" style="left:0px;top:812px" width="34" height="34" viewBox="0 0 34 34"><rect x="1" y="1" width="8" height="8" fill="#d0d0d0" stroke="#222" stroke-width="1.6"/><rect x="12" y="1" width="8" height="8" fill="#d0d0d0" stroke="#222" stroke-width="1.6"/><rect x="23" y="1" width="8" height="8" fill="#d0d0d0" stroke="#222" stroke-width="1.6"/><rect x="1" y="12" width="8" height="8" fill="#d0d0d0" stroke="#222" stroke-width="1.6"/><rect x="12" y="12" width="8" height="8" fill="#d0d0d0" stroke="#222" stroke-width="1.6"/><rect x="23" y="12" width="8" height="8" fill="#d0d0d0" stroke="#222" stroke-width="1.6"/><rect x="1" y="23" width="8" height="8" fill="#d0d0d0" stroke="#222" stroke-width="1.6"/><rect x="12" y="23" width="8" height="8" fill="#d0d0d0" stroke="#222" stroke-width="1.6"/><rect x="23" y="23" width="8" height="8" fill="#d0d0d0" stroke="#222" stroke-width="1.6"/></svg>
<div class="a" style="left:816px;top:180px;width:1px;height:1178px;background:#fff"></div>
<div class="a" style="left:823px;top:192px;width:453px;height:1px;background:#a0a0a0"></div>
<div class="a" style="left:823px;top:193px;width:453px;height:1px;background:#fff"></div>
<div class="a" style="left:823px;top:196px;width:453px;height:1px;background:#a0a0a0"></div>
<div class="a" style="left:823px;top:197px;width:453px;height:1px;background:#fff"></div>
<div class="a" style="left:832px;top:235px;width:444px;height:1px;background:#fff"></div>
<div class="a" style="left:832px;top:235px;width:1px;height:661px;background:#fff"></div>
<div class="a" style="left:832px;top:895px;width:444px;height:2px;background:#808080"></div>
<div class="a" style="left:835px;top:210px;width:60px;height:25px;background:#f0f0f0;border-top:1px solid #fff;border-left:1px solid #fff;border-right:2px solid #808080"></div>
<div class="t" style="left:842px;top:214.6px;font-size:17px;color:#000;">Work</div>
<div class="a" style="left:897px;top:210px;width:68px;height:25px;background:#f0f0f0;border-top:1px solid #fff;border-left:1px solid #fff;border-right:2px solid #808080"></div>
<div class="t" style="left:904px;top:214.6px;font-size:17px;color:#000;">Output</div>
<div class="a" style="left:967px;top:210px;width:59px;height:25px;background:#f0f0f0;border-top:1px solid #fff;border-left:1px solid #fff;border-right:none"></div>
<div class="t" style="left:974px;top:214.6px;font-size:17px;color:#000;">Doc</div>
<div class="a" style="left:1095px;top:210px;width:57px;height:25px;background:#f0f0f0;border-top:1px solid #fff;border-left:1px solid #fff;border-right:2px solid #808080"></div>
<div class="t" style="left:1102px;top:214.6px;font-size:17px;color:#000;">Test</div>
<div class="a" style="left:1153px;top:210px;width:92px;height:25px;background:#f0f0f0;border-top:1px solid #fff;border-left:1px solid #fff;border-right:2px solid #808080"></div>
<div class="t" style="left:1160px;top:214.6px;font-size:17px;color:#000;">Transform</div>
<div class="a" style="left:1027px;top:207px;width:67px;height:30px;background:#f0f0f0;border-top:1px solid #fff;border-left:1px solid #fff;border-right:2px solid #808080"></div>
<div class="t" style="left:1036px;top:211.6px;font-size:17px;color:#000;">User</div>
<svg class="a" style="left:837.5px;top:246px" width="16" height="16" viewBox="0 0 16 16"><circle cx="8" cy="8" r="6.5" fill="#fff" stroke="#fff"/><path d="M2.5 11.5A6.5 6.5 0 0 1 12 2.5" fill="none" stroke="#808080" stroke-width="1.3"/><path d="M3.5 12.5A6.5 6.5 0 0 0 13 4" fill="none" stroke="#f0f0f0" stroke-width="1"/></svg>
<svg class="a" style="left:950.5px;top:246px" width="16" height="16" viewBox="0 0 16 16"><circle cx="8" cy="8" r="6.5" fill="#fff" stroke="#fff"/><path d="M2.5 11.5A6.5 6.5 0 0 1 12 2.5" fill="none" stroke="#808080" stroke-width="1.3"/><path d="M3.5 12.5A6.5 6.5 0 0 0 13 4" fill="none" stroke="#f0f0f0" stroke-width="1"/></svg>
<svg class="a" style="left:1066.5px;top:246px" width="16" height="16" viewBox="0 0 16 16"><circle cx="8" cy="8" r="6.5" fill="#fff" stroke="#fff"/><path d="M2.5 11.5A6.5 6.5 0 0 1 12 2.5" fill="none" stroke="#808080" stroke-width="1.3"/><path d="M3.5 12.5A6.5 6.5 0 0 0 13 4" fill="none" stroke="#f0f0f0" stroke-width="1"/><circle cx="8" cy="8" r="2.3" fill="#000"/></svg>
<div class="t" style="left:860px;top:247.3px;width:74px;overflow:hidden;font-size:16.2px">Processing</div>
<div class="t" style="left:976px;top:246.6px;font-size:17px;color:#000;">Auxilliary</div>
<div class="t" style="left:1090px;top:246.6px;font-size:17px;color:#000;">Other</div>
<div class="a" style="left:836px;top:274px;width:392px;height:616px;background:#fff;border-top:2px solid #808080;border-left:2px solid #808080;border-right:1px solid #fff;border-bottom:1px solid #fff"></div>
<div class="a" style="left:1202px;top:276px;width:25px;height:613px;background:#f0f0f0"></div>
<div class="a" style="left:865px;top:276px;width:2px;height:598px;background:#ececec"></div>
<div class="a" style="left:1213px;top:328px;width:3px;height:535px;background:#888"></div>
<div class="a" style="left:868px;top:303px;width:224px;height:2px;background:#e6e6e6"></div>
<div class="a" style="left:1096px;top:303px;width:106px;height:2px;background:#e6e6e6"></div>
<div class="a" style="left:1092px;top:276px;width:2px;height:28px;background:#ececec"></div>
<div class="t" style="left:872.3px;top:282.1px;font-size:18.5px;color:#111;transform-origin:0 0;transform:scaleX(0.9543);">Array processing</div>
<div class="t" style="left:1100.0px;top:282.1px;font-size:18.5px;color:#111;transform-origin:0 0;transform:scaleX(0.9401);">Bi-dir Array</div>
<div class="a" style="left:868px;top:333px;width:224px;height:2px;background:#e6e6e6"></div>
<div class="a" style="left:1096px;top:333px;width:106px;height:2px;background:#e6e6e6"></div>
<div class="a" style="left:1092px;top:306px;width:2px;height:28px;background:#ececec"></div>
<div class="t" style="left:872.3px;top:312.1px;font-size:18.5px;color:#111;transform-origin:0 0;transform:scaleX(0.9477);">Backlash X(mm)</div>
<div class="t" style="left:1100.0px;top:312.1px;font-size:18.5px;color:#111;transform-origin:0 0;transform:scaleX(1.0077);">0.000</div>
<div class="a" style="left:868px;top:363px;width:224px;height:2px;background:#e6e6e6"></div>
<div class="a" style="left:1096px;top:363px;width:106px;height:2px;background:#e6e6e6"></div>
<div class="a" style="left:1092px;top:336px;width:2px;height:28px;background:#ececec"></div>
<div class="t" style="left:872.3px;top:342.1px;font-size:18.5px;color:#111;transform-origin:0 0;transform:scaleX(0.9584);">Backlash Y(mm)</div>
<div class="t" style="left:1100.0px;top:342.1px;font-size:18.5px;color:#111;transform-origin:0 0;transform:scaleX(1.0077);">0.000</div>
<div class="a" style="left:868px;top:393px;width:224px;height:2px;background:#e6e6e6"></div>
<div class="a" style="left:1096px;top:393px;width:106px;height:2px;background:#e6e6e6"></div>
<div class="a" style="left:1092px;top:366px;width:2px;height:28px;background:#ececec"></div>
<div class="t" style="left:872.3px;top:372.1px;font-size:18.5px;color:#111;transform-origin:0 0;transform:scaleX(1.0150);">Blow type</div>
<div class="t" style="left:1100px;top:372.1px;width:102px;overflow:hidden;font-size:18.5px;color:#111">Laser on blo’</div>
<div class="a" style="left:868px;top:423px;width:224px;height:2px;background:#e6e6e6"></div>
<div class="a" style="left:1096px;top:423px;width:106px;height:2px;background:#e6e6e6"></div>
<div class="a" style="left:1092px;top:396px;width:2px;height:28px;background:#ececec"></div>
<div class="t" style="left:872.3px;top:402.1px;font-size:18.5px;color:#111;transform-origin:0 0;transform:scaleX(0.9935);">Return parameter</div>
<div class="a" style="left:842px;top:402px;width:20px;height:19px;background:#fff;border:1.5px solid #333"></div>
<div class="a" style="left:845px;top:410.5px;width:14px;height:1.5px;background:#333"></div>
<div class="a" style="left:868px;top:453px;width:224px;height:2px;background:#e6e6e6"></div>
<div class="a" style="left:1096px;top:453px;width:106px;height:2px;background:#e6e6e6"></div>
<div class="a" style="left:1092px;top:426px;width:2px;height:28px;background:#ececec"></div>
<div class="t" style="left:872.3px;top:432.1px;font-size:18.5px;color:#111;transform-origin:0 0;transform:scaleX(0.9935);">Return position</div>
<div class="t" style="left:1100px;top:432.1px;width:102px;overflow:hidden;font-size:18.5px;color:#111">Positioning p</div>
<div class="a" style="left:868px;top:483px;width:224px;height:2px;background:#e6e6e6"></div>
<div class="a" style="left:1096px;top:483px;width:106px;height:2px;background:#e6e6e6"></div>
<div class="a" style="left:1092px;top:456px;width:2px;height:28px;background:#ececec"></div>
<div class="t" style="left:872.3px;top:462.1px;font-size:18.5px;color:#111;transform-origin:0 0;transform:scaleX(0.9662);">Focusing parameter</div>
<div class="a" style="left:842px;top:462px;width:20px;height:19px;background:#fff;border:1.5px solid #333"></div>
<div class="a" style="left:845px;top:470.5px;width:14px;height:1.5px;background:#333"></div>
<div class="a" style="left:868px;top:513px;width:224px;height:2px;background:#e6e6e6"></div>
<div class="a" style="left:1096px;top:513px;width:106px;height:2px;background:#e6e6e6"></div>
<div class="a" style="left:1092px;top:486px;width:2px;height:28px;background:#ececec"></div>
<div class="t" style="left:872.3px;top:492.1px;font-size:18.5px;color:#111;transform-origin:0 0;transform:scaleX(1.0100);">Focus depth(mm)</div>
<div class="t" style="left:1100.0px;top:492.1px;font-size:18.5px;color:#111;transform-origin:0 0;transform:scaleX(1.0228);">8.700</div>
<div class="a" style="left:868px;top:543px;width:224px;height:2px;background:#e6e6e6"></div>
<div class="a" style="left:1096px;top:543px;width:106px;height:2px;background:#e6e6e6"></div>
<div class="a" style="left:1092px;top:516px;width:2px;height:28px;background:#ececec"></div>
<div class="t" style="left:872.3px;top:522.1px;font-size:18.5px;color:#111;transform-origin:0 0;transform:scaleX(0.9775);">Material thickness(mm)</div>
<div class="t" style="left:1100.0px;top:522.1px;font-size:18.5px;color:#111;transform-origin:0 0;transform:scaleX(1.0077);">0.000</div>
<div class="a" style="left:868px;top:573px;width:224px;height:2px;background:#e6e6e6"></div>
<div class="a" style="left:1096px;top:573px;width:106px;height:2px;background:#e6e6e6"></div>
<div class="a" style="left:1092px;top:546px;width:2px;height:28px;background:#ececec"></div>
<div class="t" style="left:872.3px;top:552.1px;font-size:18.5px;color:#111;transform-origin:0 0;transform:scaleX(0.9804);">Focusing type</div>
<div class="t" style="left:1100px;top:552.1px;width:102px;overflow:hidden;font-size:18.5px;color:#111">contact moc</div>
<div class="a" style="left:868px;top:603px;width:224px;height:2px;background:#e6e6e6"></div>
<div class="a" style="left:1096px;top:603px;width:106px;height:2px;background:#e6e6e6"></div>
<div class="a" style="left:1092px;top:576px;width:2px;height:28px;background:#ececec"></div>
<div class="t" style="left:872.3px;top:582.1px;font-size:18.5px;color:#111;transform-origin:0 0;transform:scaleX(0.9451);">Wireless panel</div>
<div class="a" style="left:842px;top:582px;width:20px;height:19px;background:#fff;border:1.5px solid #333"></div>
<div class="a" style="left:845px;top:590.5px;width:14px;height:1.5px;background:#333"></div>
<div class="a" style="left:868px;top:633px;width:224px;height:2px;background:#e6e6e6"></div>
<div class="a" style="left:1096px;top:633px;width:106px;height:2px;background:#e6e6e6"></div>
<div class="a" style="left:1092px;top:606px;width:2px;height:28px;background:#ececec"></div>
<div class="t" style="left:872.3px;top:612.1px;font-size:18.5px;color:#111;transform-origin:0 0;transform:scaleX(0.9812);">Enable speed shift</div>
<div class="t" style="left:1100.0px;top:612.1px;font-size:18.5px;color:#111;transform-origin:0 0;transform:scaleX(0.9459);">No</div>
<div class="a" style="left:868px;top:663px;width:224px;height:2px;background:#e6e6e6"></div>
<div class="a" style="left:1096px;top:663px;width:106px;height:2px;background:#e6e6e6"></div>
<div class="a" style="left:1092px;top:636px;width:2px;height:28px;background:#ececec"></div>
<div class="t" style="left:872.3px;top:642.1px;font-size:18.5px;color:#111;transform-origin:0 0;transform:scaleX(0.9933);">Fast moving(mm/s)</div>
<div class="t" style="left:1100.0px;top:642.1px;font-size:18.5px;color:#111;transform-origin:0 0;transform:scaleX(1.0198);">200.000</div>
<div class="a" style="left:868px;top:693px;width:224px;height:2px;background:#e6e6e6"></div>
<div class="a" style="left:1096px;top:693px;width:106px;height:2px;background:#e6e6e6"></div>
<div class="a" style="left:1092px;top:666px;width:2px;height:28px;background:#ececec"></div>
<div class="t" style="left:872.3px;top:672.1px;font-size:18.5px;color:#111;transform-origin:0 0;transform:scaleX(1.0029);">Slow moving(mm/s)</div>
<div class="t" style="left:1100.0px;top:672.1px;font-size:18.5px;color:#111;transform-origin:0 0;transform:scaleX(1.0140);">50.000</div>
<div class="a" style="left:868px;top:723px;width:224px;height:2px;background:#e6e6e6"></div>
<div class="a" style="left:1096px;top:723px;width:106px;height:2px;background:#e6e6e6"></div>
<div class="a" style="left:1092px;top:696px;width:2px;height:28px;background:#ececec"></div>
<div class="t" style="left:872.3px;top:702.1px;font-size:18.5px;color:#111;transform-origin:0 0;transform:scaleX(0.9305);">Special param</div>
<div class="a" style="left:842px;top:702px;width:20px;height:19px;background:#fff;border:1.5px solid #333"></div>
<div class="a" style="left:845px;top:710.5px;width:14px;height:1.5px;background:#333"></div>
<div class="a" style="left:868px;top:753px;width:224px;height:2px;background:#e6e6e6"></div>
<div class="a" style="left:1096px;top:753px;width:106px;height:2px;background:#e6e6e6"></div>
<div class="a" style="left:1092px;top:726px;width:2px;height:28px;background:#ececec"></div>
<div class="t" style="left:872.3px;top:732.1px;font-size:18.5px;color:#111;transform-origin:0 0;transform:scaleX(1.0113);">Pen up(mm)</div>
<div class="t" style="left:1100.0px;top:732.1px;font-size:18.5px;color:#111;transform-origin:0 0;transform:scaleX(1.0077);">0.000</div>
<div class="a" style="left:868px;top:783px;width:224px;height:2px;background:#e6e6e6"></div>
<div class="a" style="left:1096px;top:783px;width:106px;height:2px;background:#e6e6e6"></div>
<div class="a" style="left:1092px;top:756px;width:2px;height:28px;background:#ececec"></div>
<div class="t" style="left:872.3px;top:762.1px;font-size:18.5px;color:#111;transform-origin:0 0;transform:scaleX(1.0253);">Pen down(mm)</div>
<div class="t" style="left:1100.0px;top:762.1px;font-size:18.5px;color:#111;transform-origin:0 0;transform:scaleX(1.0077);">0.000</div>
<div class="a" style="left:868px;top:813px;width:224px;height:2px;background:#e6e6e6"></div>
<div class="a" style="left:1096px;top:813px;width:106px;height:2px;background:#e6e6e6"></div>
<div class="a" style="left:1092px;top:786px;width:2px;height:28px;background:#ececec"></div>
<div class="t" style="left:872.3px;top:792.1px;font-size:18.5px;color:#111;transform-origin:0 0;transform:scaleX(1.0259);">Z up down mode</div>
<div class="t" style="left:1100.0px;top:792.1px;font-size:18.5px;color:#111;transform-origin:0 0;transform:scaleX(1.0091);">Motor mode</div>
<div class="a" style="left:868px;top:843px;width:224px;height:2px;background:#e6e6e6"></div>
<div class="a" style="left:1096px;top:843px;width:106px;height:2px;background:#e6e6e6"></div>
<div class="a" style="left:1092px;top:816px;width:2px;height:28px;background:#ececec"></div>
<div class="t" style="left:872.3px;top:822.1px;font-size:18.5px;color:#111;transform-origin:0 0;transform:scaleX(0.9912);">Inhale on delay(ms)</div>
<div class="t" style="left:1100.0px;top:822.1px;font-size:18.5px;color:#111;transform-origin:0 0;transform:scaleX(0.9642);">0</div>
<div class="a" style="left:868px;top:873px;width:224px;height:2px;background:#e6e6e6"></div>
<div class="a" style="left:1096px;top:873px;width:106px;height:2px;background:#e6e6e6"></div>
<div class="a" style="left:1092px;top:846px;width:2px;height:28px;background:#ececec"></div>
<div class="t" style="left:872.3px;top:852.1px;font-size:18.5px;color:#111;transform-origin:0 0;transform:scaleX(1.0046);">Inhale off delay(ms)</div>
<div class="t" style="left:1100.0px;top:852.1px;font-size:18.5px;color:#111;transform-origin:0 0;transform:scaleX(0.9642);">0</div>
<div class="a" style="left:1232px;top:284px;width:60px;height:65px;background:#f0f0f0;border-top:2px solid #fff;border-left:2px solid #fff;border-bottom:3px solid #808080"></div>
<div class="t" style="left:1245px;top:308.5px;font-size:16px;color:#000;">Open</div>
<div class="a" style="left:1232px;top:357px;width:60px;height:65px;background:#f0f0f0;border-top:2px solid #fff;border-left:2px solid #fff;border-bottom:3px solid #808080"></div>
<div class="t" style="left:1245px;top:381.5px;font-size:16px;color:#000;">Save</div>
<div class="a" style="left:1232px;top:429px;width:60px;height:65px;background:#f0f0f0;border-top:2px solid #fff;border-left:2px solid #fff;border-bottom:3px solid #808080"></div>
<div class="t" style="left:1245px;top:453.5px;font-size:16px;color:#000;">Read</div>
<div class="a" style="left:1232px;top:502px;width:60px;height:65px;background:#f0f0f0;border-top:2px solid #fff;border-left:2px solid #fff;border-bottom:3px solid #808080"></div>
<div class="t" style="left:1245px;top:526.5px;font-size:16px;color:#000;">Write</div>
<div class="a" style="left:1249px;top:576px;width:40px;height:314px;border-top:2px solid #808080;border-left:2px solid #808080;border-bottom:1px solid #fff"></div>
<div class="a" style="left:817px;top:1057px;width:459px;height:2px;background:linear-gradient(#a0a0a0,#fff)"></div>
<div class="a" style="left:823px;top:1069px;width:453px;height:1px;background:#a0a0a0"></div>
<div class="a" style="left:823px;top:1070px;width:453px;height:1px;background:#fff"></div>
<div class="a" style="left:823px;top:1074px;width:453px;height:1px;background:#a0a0a0"></div>
<div class="a" style="left:823px;top:1075px;width:453px;height:1px;background:#fff"></div>
<div class="a" style="left:827px;top:1092px;width:428px;height:218px;border:1px solid #a0a0a0;box-shadow:1px 1px 0 #fff inset, 1px 1px 0 #fff"></div>
<div class="a" style="left:834px;top:1082px;width:88px;height:20px;background:#f0f0f0"></div>
<div class="t" style="left:838px;top:1085.5px;font-size:16px;color:#000;">Laser work</div>
<div class="a" style="left:979px;top:1107px;width:152px;height:33px;background:#f0f0f0;border-top:1px solid #fff;border-left:1px solid #fff;border-right:2px solid #808080;border-bottom:2px solid #808080;box-shadow:inset -1px -1px 0 #a0a0a0"></div>
<div class="t" style="left:979px;top:1115.5px;width:152px;text-align:center;font-size:16px">Pause/Continue</div>
<div class="a" style="left:1132px;top:1107px;width:109px;height:33px;background:#f0f0f0;border-top:1px solid #fff;border-left:1px solid #fff;border-right:2px solid #808080;border-bottom:2px solid #808080;box-shadow:inset -1px -1px 0 #a0a0a0"></div>
<div class="t" style="left:1132px;top:1115.5px;width:109px;text-align:center;font-size:16px">Stop</div>
<div class="a" style="left:840px;top:1144px;width:137px;height:34px;background:#f0f0f0;border-top:1px solid #fff;border-left:1px solid #fff;border-right:2px solid #808080;border-bottom:2px solid #808080;box-shadow:inset -1px -1px 0 #a0a0a0"></div>
<div class="t" style="left:840px;top:1152.5px;width:137px;text-align:center;font-size:16px">SaveToUFile</div>
<div class="a" style="left:979px;top:1144px;width:152px;height:34px;background:#f0f0f0;border-top:1px solid #fff;border-left:1px solid #fff;border-right:2px solid #808080;border-bottom:2px solid #808080;box-shadow:inset -1px -1px 0 #a0a0a0"></div>
<div class="t" style="left:979px;top:1152.5px;width:152px;text-align:center;font-size:16px">UFileOutput</div>
<div class="a" style="left:1131px;top:1144px;width:110px;height:34px;background:#f0f0f0;border-top:1px solid #fff;border-left:1px solid #fff;border-right:2px solid #808080;border-bottom:2px solid #808080;box-shadow:inset -1px -1px 0 #a0a0a0"></div>
<div class="t" style="left:1131px;top:1152.5px;width:110px;text-align:center;font-size:16px">Download</div>
<div class="t" style="left:915px;top:1198.5px;font-size:16px;color:#000;">Position:</div>
<div class="a" style="left:984px;top:1185px;width:257px;height:29px;background:#fff;border-top:2px solid #808080;border-left:2px solid #808080;border-right:1px solid #e0e0e0;border-bottom:1px solid #e0e0e0"></div>
<div class="t" style="left:989px;top:1193.5px;font-size:16px;color:#000;">Current position</div>
<div class="a" style="left:1215px;top:1187px;width:25px;height:26px;background:#f0f0f0;border-top:1px solid #fff;border-left:1px solid #fff;border-right:2px solid #808080;border-bottom:2px solid #808080"></div>
<svg class="a" style="left:1220px;top:1194px" width="14" height="10" viewBox="0 0 14 10"><path d="M2 2h10l-5 6z" fill="#000"/></svg>
<div class="a" style="left:840px;top:1233px;width:18px;height:17px;background:#fff;border-top:2px solid #808080;border-left:2px solid #808080;border-right:1px solid #e0e0e0;border-bottom:1px solid #e0e0e0"></div>
<svg class="a" style="left:842px;top:1235px" width="14" height="13" viewBox="0 0 14 13"><path d="M2 6l3 3 7-7" fill="none" stroke="#000" stroke-width="2.4"/></svg>
<div class="t" style="left:866px;top:1235.5px;font-size:16px;color:#000;">Path optimize</div>
<div class="a" style="left:840px;top:1255px;width:18px;height:18px;background:#fff;border-top:2px solid #808080;border-left:2px solid #808080;border-right:1px solid #e0e0e0;border-bottom:1px solid #e0e0e0"></div>
<div class="t" style="left:866px;top:1257.5px;font-size:16px;color:#000;">Output select graphics</div>
<div class="a" style="left:866px;top:1282px;width:17px;height:18px;background:#f0f0f0;border-top:2px solid #a0a0a0;border-left:2px solid #a0a0a0;border-right:1px solid #fff;border-bottom:1px solid #fff"></div>
<div class="t" style="left:891px;top:1284.5px;font-size:16px;color:#a0a0a0;">Selected graphics position</div>
<div class="a" style="left:827px;top:1326px;width:428px;height:60px;border:1px solid #a0a0a0"></div>
<div class="a" style="left:834px;top:1316px;width:56px;height:20px;background:#f0f0f0"></div>
<div class="t" style="left:839px;top:1319.5px;font-size:16px;color:#000;">Device</div>
<div class="a" style="left:839px;top:1344px;width:138px;height:30px;background:#f0f0f0;border-top:2px solid #808080;border-left:2px solid #a0a0a0;border-right:2px solid #808080"></div>
<div class="t" style="left:878px;top:1352.5px;font-size:16px;color:#000;">Setting</div>
<div class="a" style="left:984px;top:1346px;width:257px;height:30px;background:#fff;border-top:3px solid #707070;border-left:2px solid #808080;border-right:2px solid #a0a0a0"></div>
<div class="t" style="left:989px;top:1354.5px;font-size:16px;color:#000;">Device (USB:Auto)</div>
<div class="a" style="left:1215px;top:1348px;width:25px;height:26px;background:#f0f0f0;border-top:1px solid #fff;border-left:1px solid #fff;border-right:2px solid #808080"></div>
<div class="a" style="left:-10px;top:300px;width:455px;height:270px;background:rgba(0,0,0,0.20);filter:blur(9px)"></div>
<div class="a" style="left:455px;top:28px;width:12px;height:530px;background:linear-gradient(90deg,rgba(0,0,0,0.035),rgba(0,0,0,0))"></div>
<div class="a" style="left:0px;top:28px;width:455px;height:535px;background:#f9f9f9;border-right:1px solid #e3e3e3;border-bottom:1px solid #e3e3e3;border-radius:0 0 8px 8px;box-shadow:none"></div>
<div class="a" style="left:6px;top:64px;width:436px;height:30px;background:#ededed;border-radius:4px"></div>
<div class="t" style="left:48.5px;top:37.6px;font-size:19px;color:#1a1a1a;transform-origin:0 0;transform:scaleX(0.9712);">New...</div>
<div class="t" style="left:358.5px;top:37.6px;font-size:19px;color:#1a1a1a;transform-origin:0 0;transform:scaleX(1.0582);">Ctrl+N</div>
<div class="t" style="left:48.5px;top:70.2px;font-size:19px;color:#1a1a1a;transform-origin:0 0;transform:scaleX(0.9644);">Open...</div>
<div class="t" style="left:358.5px;top:70.2px;font-size:19px;color:#1a1a1a;transform-origin:0 0;transform:scaleX(1.0382);">Ctrl+O</div>
<div class="t" style="left:48.5px;top:103.3px;font-size:19px;color:#1a1a1a;transform-origin:0 0;transform:scaleX(0.9072);">Save</div>
<div class="t" style="left:363.5px;top:103.3px;font-size:19px;color:#1a1a1a;transform-origin:0 0;transform:scaleX(0.9851);">Ctrl+S</div>
<div class="t" style="left:48.5px;top:136.2px;font-size:19px;color:#1a1a1a;transform-origin:0 0;transform:scaleX(0.9265);">Save As...</div>
<div class="t" style="left:48.5px;top:183.2px;font-size:19px;color:#1a1a1a;transform-origin:0 0;transform:scaleX(1.0469);">Import...</div>
<div class="t" style="left:368.0px;top:183.2px;font-size:19px;color:#1a1a1a;transform-origin:0 0;transform:scaleX(1.0461);">Ctrl+I</div>
<div class="t" style="left:48.5px;top:216.4px;font-size:19px;color:#1a1a1a;transform-origin:0 0;transform:scaleX(0.9848);">Export...</div>
<div class="t" style="left:363.5px;top:216.4px;font-size:19px;color:#1a1a1a;transform-origin:0 0;transform:scaleX(0.9851);">Ctrl+E</div>
<div class="t" style="left:48.5px;top:249.7px;font-size:19px;color:#1a1a1a;transform-origin:0 0;transform:scaleX(1.0581);">Image library</div>
<div class="a" style="left:5px;top:169px;width:438px;height:1px;background:#d8d8d8"></div>
<div class="a" style="left:5px;top:282px;width:438px;height:1px;background:#d8d8d8"></div>
<div class="a" style="left:5px;top:328px;width:438px;height:1px;background:#d8d8d8"></div>
<div class="a" style="left:5px;top:375px;width:438px;height:1px;background:#d8d8d8"></div>
<div class="a" style="left:5px;top:520px;width:438px;height:1px;background:#d8d8d8"></div>
<div class="t" style="left:48.7px;top:296.1px;font-size:19px;color:#a8a8a8;transform-origin:0 0;transform:scaleX(1.0332);">Clean background</div>
<div class="t" style="left:48.7px;top:341.4px;font-size:19px;color:#1a1a1a;transform-origin:0 0;transform:scaleX(1.0450);">Vendor settings</div>
<div class="t" style="left:48px;top:388.3px;font-size:19px;color:#1a1a1a;">1 One Laser<svg width="17" height="18" viewBox="0 0 17 18" style="display:inline-block;vertical-align:-3px;margin-right:1px"><path d="M1 4h6M4 1v15l-2-1M1 10l6-3M8 4h8M12 4v12l-2-1" fill="none" stroke="#1a1a1a" stroke-width="1.4"/></svg><svg width="17" height="18" viewBox="0 0 17 18" style="display:inline-block;vertical-align:-3px;margin-right:1px"><path d="M8 1v6M8 3h6M3 7h11v5H3zM2 14l-1 2M5 14l1 2M9 14l1 2M13 14l2 2" fill="none" stroke="#1a1a1a" stroke-width="1.4"/></svg><svg width="17" height="18" viewBox="0 0 17 18" style="display:inline-block;vertical-align:-3px;margin-right:1px"><path d="M1 2l2 2M1 6l2 2M1 15l3-5M5 2h6v9H5zM8 4v5M6 13l-1 3M10 13l1 3M13 2v12M16 1v15l-2-1" fill="none" stroke="#1a1a1a" stroke-width="1.4"/></svg><svg width="17" height="18" viewBox="0 0 17 18" style="display:inline-block;vertical-align:-3px;margin-right:1px"><path d="M1 2l2 2M1 6h3v8l2-2M7 2h9M11 2v11M7 7h8M7 13h9M14 10l2 3" fill="none" stroke="#1a1a1a" stroke-width="1.4"/></svg><svg width="17" height="18" viewBox="0 0 17 18" style="display:inline-block;vertical-align:-3px;margin-right:1px"><path d="M4 1l-3 6M3 5v11M6 2h9M6 6h9M6 10h9M10 2v11M5 14h10M4 16l1-2M8 16l1-2M12 16l1-2" fill="none" stroke="#1a1a1a" stroke-width="1.4"/></svg><svg width="17" height="18" viewBox="0 0 17 18" style="display:inline-block;vertical-align:-3px;margin-right:1px"><path d="M1 2h6v5H1zM4 7v8M1 11h5M1 15h6M9 2h7M9 2v14h7M9 6h6M12 6v6M9 10h7" fill="none" stroke="#1a1a1a" stroke-width="1.4"/></svg>.rld</div>
<div class="t" style="left:48px;top:421.4px;font-size:19px;color:#1a1a1a;">2 3.<svg width="17" height="18" viewBox="0 0 17 18" style="display:inline-block;vertical-align:-3px;margin-right:1px"><path d="M4 1l-3 6M3 5v11M6 2h9M6 6h9M6 10h9M10 2v11M5 14h10M4 16l1-2M8 16l1-2M12 16l1-2" fill="none" stroke="#1a1a1a" stroke-width="1.4"/></svg><svg width="17" height="18" viewBox="0 0 17 18" style="display:inline-block;vertical-align:-3px;margin-right:1px"><path d="M1 2h6v5H1zM4 7v8M1 11h5M1 15h6M9 2h7M9 2v14h7M9 6h6M12 6v6M9 10h7" fill="none" stroke="#1a1a1a" stroke-width="1.4"/></svg><svg width="17" height="18" viewBox="0 0 17 18" style="display:inline-block;vertical-align:-3px;margin-right:1px"><path d="M1 2l2 2M1 6l2 2M1 15l3-5M5 2h6v9H5zM8 4v5M6 13l-1 3M10 13l1 3M13 2v12M16 1v15l-2-1" fill="none" stroke="#1a1a1a" stroke-width="1.4"/></svg><svg width="17" height="18" viewBox="0 0 17 18" style="display:inline-block;vertical-align:-3px;margin-right:1px"><path d="M1 2l2 2M1 6h3v8l2-2M7 2h9M11 2v11M7 7h8M7 13h9M14 10l2 3" fill="none" stroke="#1a1a1a" stroke-width="1.4"/></svg><svg width="17" height="18" viewBox="0 0 17 18" style="display:inline-block;vertical-align:-3px;margin-right:1px"><path d="M8 1v3M1 4h15M4 5c1 4 4 8 12 11M13 5c-2 5-6 9-12 11" fill="none" stroke="#1a1a1a" stroke-width="1.4"/></svg><svg width="17" height="18" viewBox="0 0 17 18" style="display:inline-block;vertical-align:-3px;margin-right:1px"><path d="M4 1l-3 6M3 5v11M7 3l-1 4M7 6h9M11 1v15M6 10h10" fill="none" stroke="#1a1a1a" stroke-width="1.4"/></svg>0.5-4.1mm.rld</div>
<div class="t" style="left:48px;top:454.2px;font-size:19px;color:#1a1a1a;">3 <svg width="17" height="18" viewBox="0 0 17 18" style="display:inline-block;vertical-align:-3px;margin-right:1px"><path d="M8 1v4M2 4h13M4 6h9v5H4zM8 11v5M2 13h13M4 16l-2 0M12 16l3 0" fill="none" stroke="#1a1a1a" stroke-width="1.4"/></svg><svg width="17" height="18" viewBox="0 0 17 18" style="display:inline-block;vertical-align:-3px;margin-right:1px"><path d="M1 3h15M3 3v13h11V3M6 6h5v7H6zM6 9h5" fill="none" stroke="#1a1a1a" stroke-width="1.4"/></svg><svg width="17" height="18" viewBox="0 0 17 18" style="display:inline-block;vertical-align:-3px;margin-right:1px"><path d="M3 1v15M1 5h5M1 11l5-3M8 2h6v10c0 3 1 4 2 4M11 2v7l-3 7" fill="none" stroke="#1a1a1a" stroke-width="1.4"/></svg><svg width="17" height="18" viewBox="0 0 17 18" style="display:inline-block;vertical-align:-3px;margin-right:1px"><path d="M4 1l-3 6M3 5v11M6 2h9M6 6h9M6 10h9M10 2v11M5 14h10M4 16l1-2M8 16l1-2M12 16l1-2" fill="none" stroke="#1a1a1a" stroke-width="1.4"/></svg><svg width="17" height="18" viewBox="0 0 17 18" style="display:inline-block;vertical-align:-3px;margin-right:1px"><path d="M1 2h6v5H1zM4 7v8M1 11h5M1 15h6M9 2h7M9 2v14h7M9 6h6M12 6v6M9 10h7" fill="none" stroke="#1a1a1a" stroke-width="1.4"/></svg><svg width="17" height="18" viewBox="0 0 17 18" style="display:inline-block;vertical-align:-3px;margin-right:1px"><path d="M1 2l2 2M1 6l2 2M1 15l3-5M5 2h6v9H5zM8 4v5M6 13l-1 3M10 13l1 3M13 2v12M16 1v15l-2-1" fill="none" stroke="#1a1a1a" stroke-width="1.4"/></svg><svg width="17" height="18" viewBox="0 0 17 18" style="display:inline-block;vertical-align:-3px;margin-right:1px"><path d="M1 2l2 2M1 6h3v8l2-2M7 2h9M11 2v11M7 7h8M7 13h9M14 10l2 3" fill="none" stroke="#1a1a1a" stroke-width="1.4"/></svg><svg width="17" height="18" viewBox="0 0 17 18" style="display:inline-block;vertical-align:-3px;margin-right:1px"><path d="M8 1v3M1 4h15M4 5c1 4 4 8 12 11M13 5c-2 5-6 9-12 11" fill="none" stroke="#1a1a1a" stroke-width="1.4"/></svg><svg width="17" height="18" viewBox="0 0 17 18" style="display:inline-block;vertical-align:-3px;margin-right:1px"><path d="M4 1l-3 6M3 5v11M7 3l-1 4M7 6h9M11 1v15M6 10h10" fill="none" stroke="#1a1a1a" stroke-width="1.4"/></svg>.rld</div>
<div class="t" style="left:48px;top:487.4px;font-size:19px;color:#1a1a1a;">4 2.<svg width="17" height="18" viewBox="0 0 17 18" style="display:inline-block;vertical-align:-3px;margin-right:1px"><path d="M4 1l-3 6M3 5v11M6 2h9M6 6h9M6 10h9M10 2v11M5 14h10M4 16l1-2M8 16l1-2M12 16l1-2" fill="none" stroke="#1a1a1a" stroke-width="1.4"/></svg><svg width="17" height="18" viewBox="0 0 17 18" style="display:inline-block;vertical-align:-3px;margin-right:1px"><path d="M1 2h6v5H1zM4 7v8M1 11h5M1 15h6M9 2h7M9 2v14h7M9 6h6M12 6v6M9 10h7" fill="none" stroke="#1a1a1a" stroke-width="1.4"/></svg><svg width="17" height="18" viewBox="0 0 17 18" style="display:inline-block;vertical-align:-3px;margin-right:1px"><path d="M1 2l2 2M1 6l2 2M1 15l3-5M5 2h6v9H5zM8 4v5M6 13l-1 3M10 13l1 3M13 2v12M16 1v15l-2-1" fill="none" stroke="#1a1a1a" stroke-width="1.4"/></svg><svg width="17" height="18" viewBox="0 0 17 18" style="display:inline-block;vertical-align:-3px;margin-right:1px"><path d="M1 2l2 2M1 6h3v8l2-2M7 2h9M11 2v11M7 7h8M7 13h9M14 10l2 3" fill="none" stroke="#1a1a1a" stroke-width="1.4"/></svg>4.3-7.5mm.rld</div>
<div class="t" style="left:48.7px;top:533.5px;font-size:19px;color:#1a1a1a;transform-origin:0 0;transform:scaleX(0.9104);">Exit</div>
<svg class="a" style="left:0;top:0" width="1276" height="1358"><rect x="0.5" y="1.5" width="65" height="24.5" rx="4" fill="none" stroke="#ff1a12" stroke-width="4"/><rect x="4" y="63.5" width="437" height="30.5" rx="4" fill="none" stroke="#ff1a12" stroke-width="5"/><rect x="1127" y="1135.5" width="117" height="40.5" rx="5" fill="none" stroke="#ff1a12" stroke-width="4"/><path d="M421.7 82.2 L446.4 98.2 L436 98.7 L516.5 266 L426.6 103.8 L420 112.3 Z" fill="#ff1a12"/><path d="M1220.5 983 L1227 1126 L1236.5 1121 L1220.5 1147.5 L1205 1122 L1214.5 1126 Z" fill="#ff1a12"/></svg>
</body></html>
